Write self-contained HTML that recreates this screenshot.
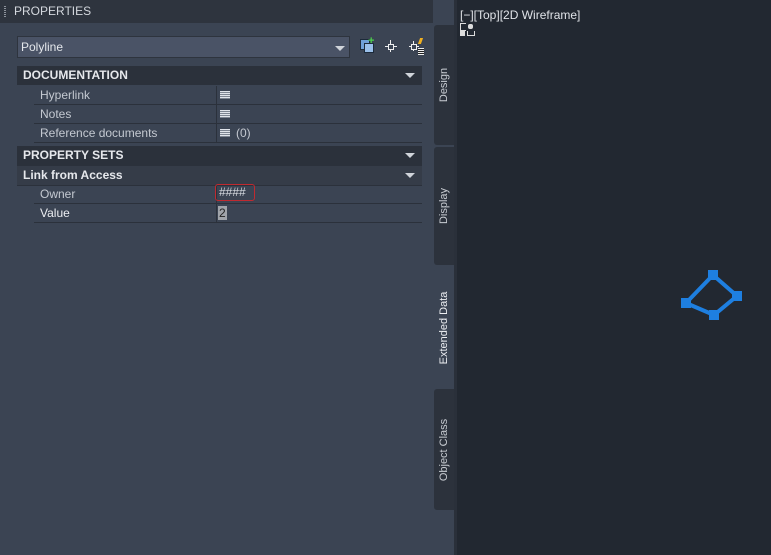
<!DOCTYPE html><html><head><style>
body{margin:0;width:771px;height:555px;background:#3b4453;font-family:"Liberation Sans",sans-serif;overflow:hidden;position:relative;font-size:12px;color:#d8dce2}
.a{position:absolute}
.title{left:0;top:0;width:433px;height:23px;background:#2e343e;}
.hdr{left:17px;width:405px;height:19px;background:#2b313b;font-weight:bold;color:#e6e8ec;line-height:19px;text-indent:6px;font-size:12px}
.hdr2{background:#353c48;}
.row{left:34px;width:388px;height:18px;border-bottom:1px solid #2b313b;line-height:18px;color:#c4c9d1}
.row span{position:absolute;left:6px}
.row i{position:absolute;left:182px;top:0;bottom:0;border-left:1px solid #2b313b}
.tri{position:absolute;right:7px;top:7px;width:0;height:0;border-left:5px solid transparent;border-right:5px solid transparent;border-top:5px solid #d0d4da}
.tab{left:434px;width:20px;background:#2c323c;border-radius:3px 0 0 3px}
.tab div{position:absolute;left:50%;top:50%;transform:translate(-50%,-50%) rotate(-90deg);white-space:nowrap;font-size:11px;color:#c8ccd2}
.ic{position:absolute;left:186px;top:5px;width:10px;height:8px;background:repeating-linear-gradient(#e0e4ea 0 1px,#7d8591 1px 2px);}
.g{position:absolute;width:10px;height:10px;background:#1e7fe0}
</style></head><body>
<div class="a title"></div>
<div class="a" style="left:4px;top:6px;width:2px;height:11px;background:repeating-linear-gradient(#8d939c 0 1px,transparent 1px 2px)"></div>
<div class="a" style="left:14px;top:4px;color:#d4d8de;font-size:12px">PROPERTIES</div>
<div class="a" style="left:457px;top:0;width:314px;height:555px;background:#222831"></div>
<div class="a" style="left:454px;top:0;width:3px;height:555px;background:#2a303a"></div>
<div class="a" style="left:460px;top:8px;color:#e0e3e8;font-size:12px">[−][Top][2D Wireframe]</div>
<div class="a" style="left:460px;top:23px;width:5px;height:6px;border:1px solid #ddd;border-right:none"></div>
<div class="a" style="left:468px;top:24px;width:5px;height:5px;background:#ddd;border-radius:2px"></div>
<div class="a" style="left:460px;top:31px;width:5px;height:5px;background:#ddd"></div>
<div class="a" style="left:467px;top:31px;width:6px;height:4px;border:1px solid #ddd;border-top:none"></div>
<div class="a" style="left:17px;top:36px;width:333px;height:22px;background:#4a5366;border:1px solid #2e343e;box-sizing:border-box;line-height:20px;text-indent:3px;color:#e4e7eb">Polyline<div class="tri" style="top:9px;right:4px"></div></div>
<div class="a" style="left:360px;top:39px;width:8px;height:9px;background:#6fa0d8;border:1px solid #1c2a3a"></div>
<div class="a" style="left:364px;top:43px;width:8px;height:8px;background:#9ac0ea;border:1px solid #1c2a3a"></div>
<div class="a" style="left:368px;top:37px;color:#4cd04c;font-weight:bold;font-size:11px;line-height:8px">+</div>
<div class="a" style="left:385px;top:46px;width:12px;height:1px;background:#eee"></div><div class="a" style="left:390px;top:40px;width:1px;height:12px;background:#eee"></div><div class="a" style="left:388px;top:44px;width:4px;height:4px;border:1px solid #eee;background:#3b4453"></div>
<div class="a" style="left:409px;top:46px;width:10px;height:1px;background:#eee"></div><div class="a" style="left:413px;top:41px;width:1px;height:10px;background:#eee"></div><div class="a" style="left:411px;top:44px;width:4px;height:4px;border:1px solid #eee;background:#3b4453"></div>
<div class="a" style="left:418px;top:48px;width:6px;height:7px;background:repeating-linear-gradient(#eee 0 1px,#222 1px 2px)"></div>
<div class="a" style="left:419px;top:38px;width:3px;height:6px;background:#f0b020;transform:skewX(-20deg)"></div>

<div class="a hdr" style="top:66px">DOCUMENTATION<div class="tri"></div></div>
<div class="a row" style="top:86px"><span>Hyperlink</span><i></i><b class="ic"></b></div>
<div class="a row" style="top:105px"><span>Notes</span><i></i><b class="ic"></b></div>
<div class="a row" style="top:124px"><span>Reference documents</span><i></i><b class="ic"></b><span style="left:202px">(0)</span></div>
<div class="a" style="left:17px;top:86px;width:17px;height:57px;background:#3b4453"></div>
<div class="a hdr" style="top:146px">PROPERTY SETS<div class="tri"></div></div>
<div class="a hdr hdr2" style="top:165px;border-top:1px solid #2b313b;border-bottom:1px solid #2b313b">Link from Access<div class="tri"></div></div>
<div class="a row" style="top:185px"><span>Owner</span><i></i><span style="left:181px;top:-1px;width:38px;height:15px;border:1px solid #c02a30;border-radius:3px;line-height:15px;text-indent:3px;color:#d8dce2">####</span></div>
<div class="a row" style="top:204px"><span style="color:#eceef2">Value</span><i></i><span style="left:184px;top:2px;height:14px;background:#a0a4aa;color:#222;line-height:14px;padding:0 1px">2</span></div>

<div class="a tab" style="top:25px;height:120px"><div>Design</div></div>
<div class="a tab" style="top:147px;height:118px"><div>Display</div></div>
<div class="a tab" style="top:268px;height:119px;background:#3b4453"><div style="color:#eceef2">Extended Data</div></div>
<div class="a tab" style="top:389px;height:121px"><div>Object Class</div></div>

<svg class="a" style="left:0;top:0" width="771" height="555"><polygon points="713,275 737,296 714,315 686,303" fill="none" stroke="#1e7fe0" stroke-width="4"/></svg>
<div class="g" style="left:708px;top:270px"></div>
<div class="g" style="left:732px;top:291px"></div>
<div class="g" style="left:709px;top:310px"></div>
<div class="g" style="left:681px;top:298px"></div>
</body></html>
